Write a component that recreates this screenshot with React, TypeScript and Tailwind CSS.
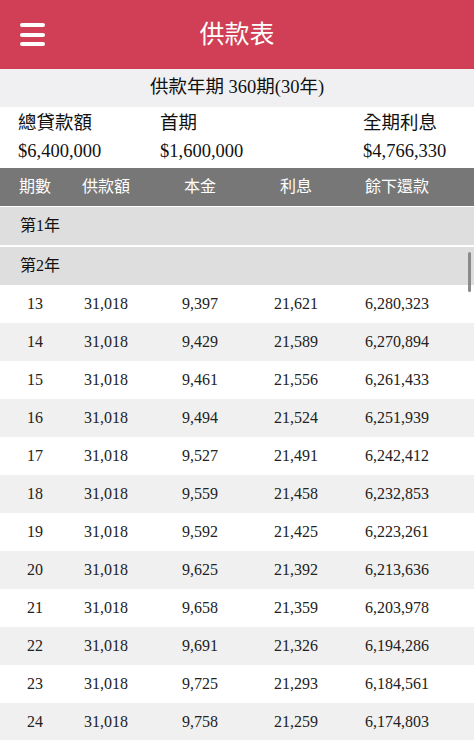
import React from 'react'

const font = { fontFamily: '"Liberation Serif", "Noto Sans CJK TC", serif' }

const rows: [number, string, string, string, string][] = [
  [13, '31,018', '9,397', '21,621', '6,280,323'],
  [14, '31,018', '9,429', '21,589', '6,270,894'],
  [15, '31,018', '9,461', '21,556', '6,261,433'],
  [16, '31,018', '9,494', '21,524', '6,251,939'],
  [17, '31,018', '9,527', '21,491', '6,242,412'],
  [18, '31,018', '9,559', '21,458', '6,232,853'],
  [19, '31,018', '9,592', '21,425', '6,223,261'],
  [20, '31,018', '9,625', '21,392', '6,213,636'],
  [21, '31,018', '9,658', '21,359', '6,203,978'],
  [22, '31,018', '9,691', '21,326', '6,194,286'],
  [23, '31,018', '9,725', '21,293', '6,184,561'],
  [24, '31,018', '9,758', '21,259', '6,174,803'],
]

const cols = 'grid grid-cols-[70px_72px_116px_76px_126px] items-center text-center'

export default function App() {
  return (
    <main className="w-[474px] h-[740px] overflow-hidden bg-white text-[#111]" style={font}>
      <header className="h-[69px] bg-[#d03f55] flex items-center relative">
        <div className="absolute left-[20px] top-[23px] flex flex-col gap-[5.5px]">
          <div className="w-[25px] h-1 bg-white rounded-full" />
          <div className="w-[25px] h-1 bg-white rounded-full" />
          <div className="w-[25px] h-1 bg-white rounded-full" />
        </div>
        <h1 className="w-full text-center text-white text-[25px]">供款表</h1>
      </header>

      <div className="h-[38px] bg-[#f0f0f2] flex items-center justify-center text-[18.5px]">
        供款年期 360期(30年)
      </div>

      <div className="h-[61px] grid grid-cols-[142px_203px_1fr] pl-[18px] text-[18.5px] leading-none pt-[7px]">
        <div className="flex flex-col gap-[9px]"><span>總貸款額</span><span>$6,400,000</span></div>
        <div className="flex flex-col gap-[9px]"><span>首期</span><span>$1,600,000</span></div>
        <div className="flex flex-col gap-[9px]"><span>全期利息</span><span>$4,766,330</span></div>
      </div>

      <div className={`${cols} h-[38px] bg-[#777777] text-white text-[16px]`}>
        <span>期數</span>
        <span>供款額</span>
        <span>本金</span>
        <span>利息</span>
        <span>餘下還款</span>
      </div>

      <div className="relative">
        <div className="h-[39px] border-t border-white bg-[#dedede] flex items-center pl-[20px] text-[16px]">第1年</div>
        <div className="h-[40px] border-t-2 border-white bg-[#dedede] flex items-center pl-[20px] text-[16px]">第2年</div>
        <div className="absolute right-[3px] top-[46px] w-[3px] h-[40px] rounded-full bg-[#8a8a8a]" />
        {rows.map((r, i) => (
          <div
            key={r[0]}
            className={`${cols} h-[38px] text-[16px] text-[#222] ${i % 2 === 1 ? 'bg-[#f0f0f0]' : 'bg-white'}`}
          >
            {r.map((c, j) => (
              <span key={j}>{c}</span>
            ))}
          </div>
        ))}
      </div>
    </main>
  )
}
